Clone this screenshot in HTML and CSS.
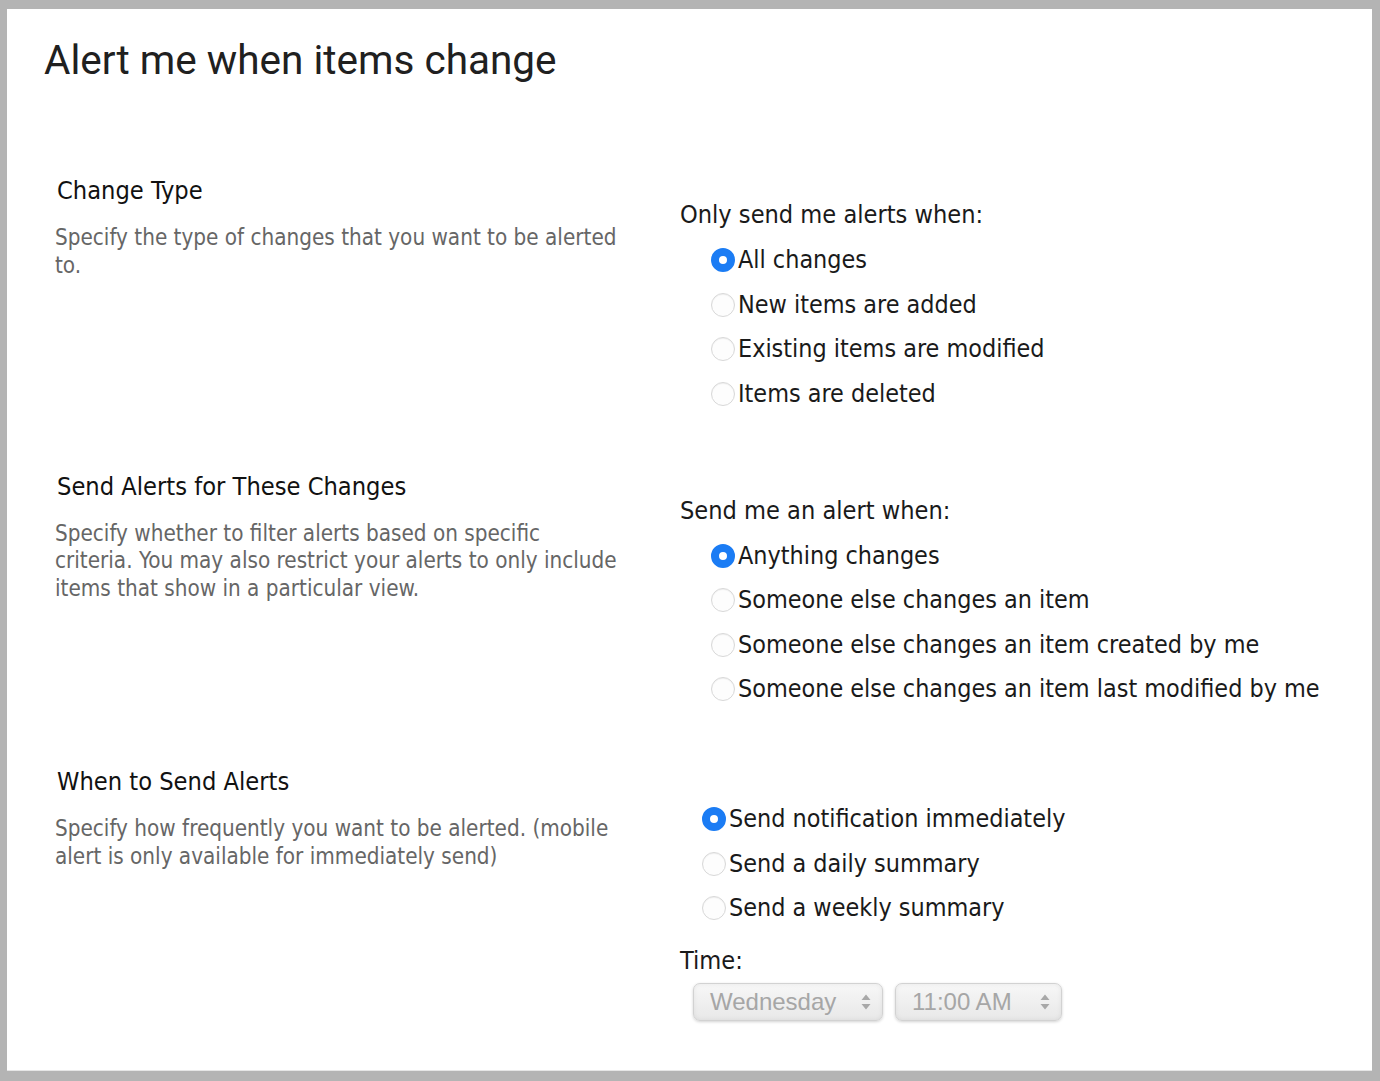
FILE: index.html
```html
<!DOCTYPE html>
<html>
<head>
<meta charset="utf-8">
<link rel="stylesheet" href="styles.css">
</head>
<body>
<div class="page">
  <h1 class="title">Alert me when items change</h1>

  <div class="section s1">
    <div class="info">
      <h2 class="heading">Change Type</h2>
      <p class="desc">Specify the type of changes that you want to be alerted to.</p>
    </div>
    <div class="controls">
      <div class="label">Only send me alerts when:</div>
      <div class="options">
        <label class="opt"><input type="radio" name="a" checked><span>All changes</span></label>
        <label class="opt"><input type="radio" name="a"><span>New items are added</span></label>
        <label class="opt"><input type="radio" name="a"><span>Existing items are modified</span></label>
        <label class="opt"><input type="radio" name="a"><span>Items are deleted</span></label>
      </div>
    </div>
  </div>

  <div class="section s2">
    <div class="info">
      <h2 class="heading">Send Alerts for These Changes</h2>
      <p class="desc">Specify whether to filter alerts based on specific criteria. You may also restrict your alerts to only include items that show in a particular view.</p>
    </div>
    <div class="controls">
      <div class="label">Send me an alert when:</div>
      <div class="options">
        <label class="opt"><input type="radio" name="b" checked><span>Anything changes</span></label>
        <label class="opt"><input type="radio" name="b"><span>Someone else changes an item</span></label>
        <label class="opt"><input type="radio" name="b"><span>Someone else changes an item created by me</span></label>
        <label class="opt"><input type="radio" name="b"><span>Someone else changes an item last modified by me</span></label>
      </div>
    </div>
  </div>

  <div class="section s3">
    <div class="info">
      <h2 class="heading">When to Send Alerts</h2>
      <p class="desc">Specify how frequently you want to be alerted. (mobile alert is only available for immediately send)</p>
    </div>
    <div class="controls">
      <div class="options options-tight">
        <label class="opt"><input type="radio" name="c" checked><span>Send notification immediately</span></label>
        <label class="opt"><input type="radio" name="c"><span>Send a daily summary</span></label>
        <label class="opt"><input type="radio" name="c"><span>Send a weekly summary</span></label>
      </div>
      <div class="label time-label">Time:</div>
      <div class="selects">
        <div class="select sel-day"><span>Wednesday</span><svg class="arrows" width="12" height="20" viewBox="0 0 12 20"><path d="M1.5 8 L6 2.5 L10.5 8 Z M1.5 12 L6 17.5 L10.5 12 Z" fill="#a8a8a8"/></svg></div>
        <div class="select sel-time"><span>11:00 AM</span><svg class="arrows" width="12" height="20" viewBox="0 0 12 20"><path d="M1.5 8 L6 2.5 L10.5 8 Z M1.5 12 L6 17.5 L10.5 12 Z" fill="#a8a8a8"/></svg></div>
      </div>
    </div>
  </div>
</div>
</body>
</html>
```

FILE: styles.css
```css
html, body {
  margin: 0;
  padding: 0;
}
body {
  background: #b4b4b4;
  width: 1380px;
  height: 1081px;
  overflow: hidden;
}
.page {
  background: #ffffff;
  margin: 9px 8px 0 7px;
  height: 1062px;
  box-sizing: border-box;
  padding-top: 27px;
  border-bottom: 1px solid #e6e6e6;
}
.title {
  margin: 0 0 0 37px;
  font-family: Roboto, "Liberation Sans", sans-serif;
  font-weight: 400;
  font-size: 40.5px;
  line-height: 48px;
  color: #202020;
}
.section {
  display: grid;
  grid-template-columns: 625px 1fr;
  padding-left: 48px;
}
.s1 { margin-top: 92px; }
.s2 { margin-top: 63px; }
.s3 { margin-top: 63px; }
.info {
  width: 565px;
}
.heading {
  margin: 0;
  font-family: "DejaVu Sans Condensed", "DejaVu Sans", sans-serif;
  font-weight: 400;
  font-size: 25.2px;
  line-height: 30px;
  color: #111;
  padding-left: 2px;
}
.desc {
  margin: 18px 0 0;
  font-family: "DejaVu Sans Condensed", "DejaVu Sans", sans-serif;
  font-size: 22.3px;
  line-height: 27.5px;
  color: #666;
}
.controls {
  padding-top: 24px;
  font-family: "DejaVu Sans Condensed", "DejaVu Sans", sans-serif;
  color: #1a1a1a;
}
.s3 .controls { padding-top: 37px; }
.label {
  font-size: 25.1px;
  line-height: 30px;
}
.options {
  margin-top: 15px;
  padding-left: 31px;
  display: flex;
  flex-direction: column;
  gap: 14.5px;
}
.options-tight {
  margin-top: 0;
  padding-left: 22px;
}
.opt {
  display: flex;
  align-items: center;
  font-size: 24.9px;
  line-height: 30px;
}
.opt input {
  appearance: none;
  -webkit-appearance: none;
  margin: 0 3px 0 0;
  width: 24px;
  height: 24px;
  border-radius: 50%;
  border: 1px solid #d8d8d8;
  background: #fdfdfd;
  box-shadow: inset 0 1px 1px rgba(0,0,0,0.06);
  flex: none;
  box-sizing: border-box;
}
.opt input:checked {
  border: 8px solid #1b7cf4;
  background: #fff;
  box-shadow: none;
}
.time-label {
  margin-top: 23px;
}
.selects {
  margin-top: 7px;
  padding-left: 13px;
  display: flex;
  gap: 12px;
}
.select {
  display: flex;
  align-items: center;
  justify-content: space-between;
  height: 38px;
  box-sizing: border-box;
  padding: 0 10px 0 16px;
  border-radius: 7px;
  border: 1px solid #d2d2d2;
  background: linear-gradient(#f7f7f7, #e8e8e8);
  box-shadow: 0 1px 3px rgba(0,0,0,0.18), inset 0 0 5px rgba(0,0,0,0.06);
  color: #a6a6a6;
  font-family: "Liberation Sans", Arial, sans-serif;
  font-size: 24px;
}
.sel-day { width: 190px; }
.sel-time { width: 167px; }
.arrows { flex: none; }
```
